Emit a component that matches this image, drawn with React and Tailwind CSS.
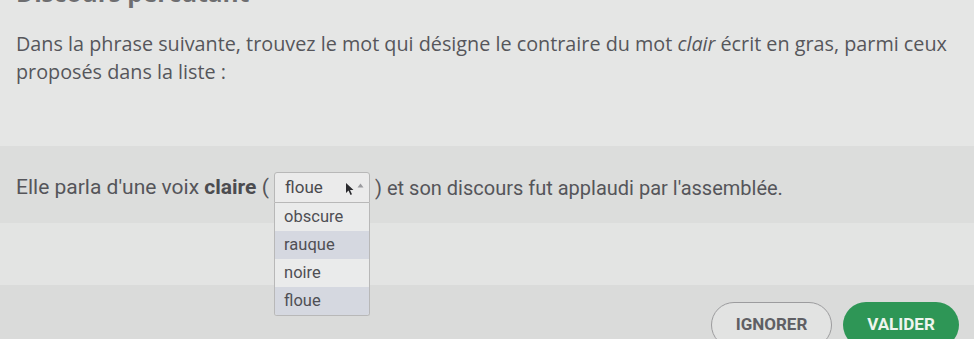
import React from "react";

export default function App() {
  const items = [
    { t: "obscure", hl: false },
    { t: "rauque", hl: true },
    { t: "noire", hl: false },
    { t: "floue", hl: true },
  ];
  return (
    <div className="w-[974px] h-[339px] overflow-hidden bg-[#e4e5e4] flex flex-col relative">
      <div className="h-[146px] shrink-0 flex flex-col bg-[#e5e6e5]">
        <h2
          className="px-4 -mt-[22px] text-[24.5px] leading-[30px] font-bold text-[#6e6e70] whitespace-nowrap"
          style={{ fontFamily: '"Open Sans", sans-serif' }}
        >
          Discours percutant
        </h2>
        <p
          className="px-4 mt-[22px] text-[19.8px] leading-[28px] text-[#56565b]"
          style={{ fontFamily: '"Open Sans", sans-serif' }}
        >
          Dans la phrase suivante, trouvez le mot qui désigne le contraire du mot <em>clair</em> écrit en gras, parmi ceux proposés dans la liste :
        </p>
      </div>
      <div
        className="h-[77px] shrink-0 bg-[#dcdddc] flex items-start px-4 pt-[26px] text-[#55555a] relative z-10"
        style={{ fontFamily: "Roboto, sans-serif" }}
      >
        <div className="flex items-center h-[31px] whitespace-nowrap">
          <span className="text-[21px]">
            Elle parla d'une voix <b className="font-bold text-[#4c4c50]">claire</b> (&nbsp;
          </span>
          <div className="relative w-[96px] h-[31px]">
            <div className="h-[31px] border border-[#b8b8b8] rounded-t-[3px] bg-[#ebebeb] flex items-center pl-[10px] text-[17px] text-[#4a4a4e] relative">
              floue
              <svg className="absolute left-[70px] top-[9px]" width="10" height="14" viewBox="0 0 10 14">
                <path d="M1 1 L1 11 L3.5 8.6 L5.5 13 L7 12.3 L5 8 L8.5 8 Z" fill="#2a2a2e" />
              </svg>
              <svg className="absolute left-[82px] top-[10px]" width="7" height="5" viewBox="0 0 7 5">
                <path d="M0.5 4.5 L3.5 0.5 L6.5 4.5 Z" fill="#9a9a9e" />
              </svg>
            </div>
            <div className="absolute left-0 top-[31px] w-[96px] border border-t-0 border-[#b8b8b8] rounded-b-[3px] bg-[#eaebeb] overflow-hidden">
              {items.map((it) => (
                <div
                  key={it.t}
                  className={
                    "h-[28px] flex items-center pl-[9px] text-[16.5px] text-[#4f4f54] " +
                    (it.hl ? "bg-[#d5d8e0]" : "bg-[#eaebeb]")
                  }
                >
                  {it.t}
                </div>
              ))}
            </div>
          </div>
          <span className="text-[20px]">&nbsp;) et son discours fut applaudi par l'assemblée.</span>
        </div>
      </div>
      <div className="h-[62px] shrink-0 bg-[#e3e4e3]" />
      <div
        className="flex-1 bg-[#dadbda] flex justify-end items-start gap-[11px] pr-[15px] pt-[17px]"
        style={{ fontFamily: "Roboto, sans-serif" }}
      >
        <button className="w-[121px] h-[46px] shrink-0 rounded-full border-[1.5px] border-[#9c9c9e] bg-[#e2e3e2] text-[#5f5f64] font-bold text-[17px]">
          IGNORER
        </button>
        <button className="w-[116px] h-[46px] shrink-0 rounded-full bg-[#2e9656] text-[#eef5ef] font-bold text-[17px]">
          VALIDER
        </button>
      </div>
    </div>
  );
}
